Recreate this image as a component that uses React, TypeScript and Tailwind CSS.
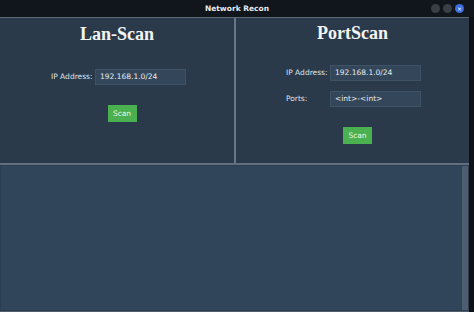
import React from "react"

function Field({ label, value }: { label: string; value: string }) {
  return (
    <div className="flex items-center">
      <span className="w-[44px] text-[7.5px] text-[#dfe5ea]">{label}</span>
      <div className="flex h-[16px] w-[91px] items-center border border-[#3f5366] bg-[#33465a] px-[4px] text-[7.5px] text-[#e8edf1]">
        {value}
      </div>
    </div>
  )
}

function ScanButton() {
  return (
    <button className="flex h-[17px] w-[29px] items-center justify-center bg-[#4bb04f] text-[7.5px] text-[#e9f5e6]">
      Scan
    </button>
  )
}

export default function App() {
  return (
    <div
      className="flex h-[312px] w-[474px] flex-col bg-[#0e1217]"
      style={{ fontFamily: '"DejaVu Sans", sans-serif' }}
    >
      {/* title bar */}
      <div className="relative flex h-[17px] items-center justify-center bg-[#11161d]">
        <span className="text-[7.5px] font-bold text-[#e6e9ec]">Network Recon</span>
        <div className="absolute right-[10px] top-[4px] flex gap-[3px]">
          <span className="h-[9px] w-[9px] rounded-full bg-[#3a3f47]" />
          <span className="h-[9px] w-[9px] rounded-full bg-[#3a3f47]" />
          <span className="flex h-[9px] w-[9px] items-center justify-center rounded-full bg-[#3d6fe0] text-[6px] leading-none text-white">
            ×
          </span>
        </div>
      </div>

      <div className="flex w-[469px] flex-1 flex-col border-t border-[#5b6a79]">
        {/* top panels */}
        <div className="flex h-[147px] border-b-2 border-[#5f6f80]">
          <div className="flex w-[236px] flex-col items-center border-r-2 border-[#66778a] bg-[#2b3a4a]">
            <h1
              className="mt-[5px] text-[18px] font-bold leading-[22px] text-[#f3f4f5]"
              style={{ fontFamily: '"Liberation Serif", serif' }}
            >
              Lan-Scan
            </h1>
            <div className="mt-[24px] ml-[3px]">
              <Field label="IP Address:" value="192.168.1.0/24" />
            </div>
            <div className="mt-[20px] ml-[10px]">
              <ScanButton />
            </div>
          </div>
          <div className="flex flex-1 flex-col items-center bg-[#2b3a4a]">
            <h1
              className="mt-[4px] text-[18px] font-bold leading-[22px] text-[#f3f4f5]"
              style={{ fontFamily: '"Liberation Serif", serif' }}
            >
              PortScan
            </h1>
            <div className="mt-[21px] ml-[2px] flex flex-col gap-[10px]">
              <Field label="IP Address:" value="192.168.1.0/24" />
              <Field label="Ports:" value="<int>-<int>" />
            </div>
            <div className="mt-[20px] ml-[10px]">
              <ScanButton />
            </div>
          </div>
        </div>

        {/* output area */}
        <div className="flex flex-1 border-b border-[#4f5f6f] bg-[#2d3e50] p-[1px]">
          <div className="flex-1 bg-[#31455a]" />
          <div className="w-[6px] bg-[#4d5e6e]" />
        </div>
      </div>
    </div>
  )
}
